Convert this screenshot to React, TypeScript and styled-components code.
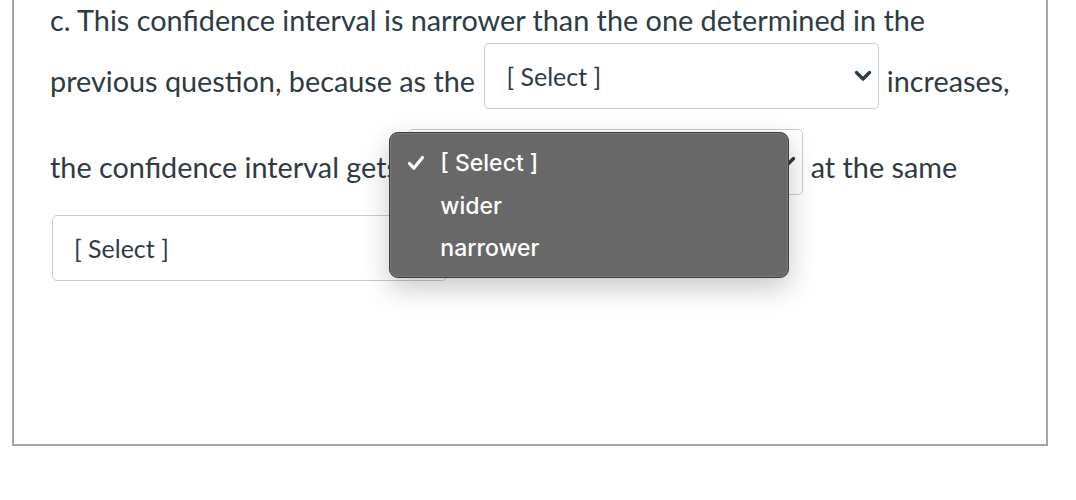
import React from 'react'
import styled, { createGlobalStyle } from 'styled-components'

const GlobalStyle = createGlobalStyle`
  html, body {
    margin: 0;
    padding: 0;
    background: #fff;
  }
`

const Panel = styled.section`
  box-sizing: border-box;
  width: 1036px;
  height: 446px;
  margin-left: 12px;
  border: 2px solid #a5a5a5;
  border-top: none;
  background: #fff;
  padding: 2px 26px 0 36px;
`

const Question = styled.p`
  margin: 0;
  font-family: Lato, 'Liberation Sans', sans-serif;
  font-size: 28.8px;
  line-height: 36px;
  color: #2d3b45;
`

const SelectBox = styled.span`
  position: relative;
  display: inline-flex;
  align-items: center;
  justify-content: space-between;
  box-sizing: border-box;
  width: 395px;
  height: 66px;
  margin: 5px 0 15px 2px;
  padding: 0 6px 0 21px;
  border: 1px solid #c7cdd1;
  border-radius: 5px;
  background: #fff;
  font-size: 25px;
  line-height: 30px;
  color: #2d3b45;
  vertical-align: 6px;
`

const Chevron = styled.svg`
  flex: none;
  width: 18px;
  height: 12px;
`

const Menu = styled.ul`
  position: absolute;
  z-index: 2;
  right: 13px;
  top: 2px;
  box-sizing: border-box;
  width: 400px;
  margin: 0;
  padding: 9px 0 7px;
  list-style: none;
  background: #686868;
  border: 1px solid #3c3c3c;
  border-radius: 9px;
  box-shadow: inset 0 0 0 1px rgba(255, 255, 255, 0.12),
    0 10px 28px rgba(0, 0, 0, 0.22);
  font-family: Inter, 'Noto Sans', sans-serif;
  font-size: 23px;
  font-weight: 500;
  line-height: 28px;
  color: #fff;
`

const MenuItem = styled.li`
  display: flex;
  align-items: center;
  height: 42.5px;
  padding-left: 17px;
`

const CheckSlot = styled.span`
  display: inline-flex;
  align-items: center;
  width: 33px;
`

const Select = ({
  label = '[ Select ]',
  children,
}: {
  label?: string
  children?: React.ReactNode
}) => (
  <SelectBox>
    <span>{label}</span>
    <Chevron viewBox="0 0 18 12">
      <path
        d="M2.5 2.5 L9 9 L15.5 2.5"
        fill="none"
        stroke="#2d3b45"
        strokeWidth="3.4"
        strokeLinecap="round"
        strokeLinejoin="round"
      />
    </Chevron>
    {children}
  </SelectBox>
)

const options = ['[ Select ]', 'wider', 'narrower']

const App = () => {
  return (
    <>
      <GlobalStyle />
      <Panel>
        <Question>
          c. This confidence interval is narrower than the one determined in
          the previous question, because as the <Select /> increases, the
          confidence interval gets{' '}
          <Select>
            <Menu>
              {options.map((o, i) => (
                <MenuItem key={o}>
                  <CheckSlot>
                    {i === 0 && (
                      <svg width="18" height="16" viewBox="0 0 18 16">
                        <path
                          d="M2.5 8.5 L6.8 13.2 L15.5 2.5"
                          fill="none"
                          stroke="#fff"
                          strokeWidth="3.2"
                          strokeLinecap="round"
                          strokeLinejoin="round"
                        />
                      </svg>
                    )}
                  </CheckSlot>
                  {o}
                </MenuItem>
              ))}
            </Menu>
          </Select>{' '}
          at the same <Select />
        </Question>
      </Panel>
    </>
  )
}

export default App
